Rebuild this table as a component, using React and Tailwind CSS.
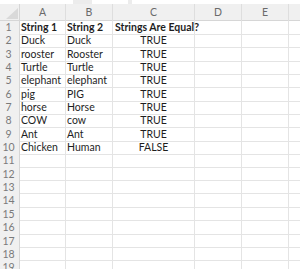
const rows = [
  ['String 1', 'String 2', 'Strings Are Equal?'],
  ['Duck', 'Duck', 'TRUE'],
  ['rooster', 'Rooster', 'TRUE'],
  ['Turtle', 'Turtle', 'TRUE'],
  ['elephant', 'elephant', 'TRUE'],
  ['pig', 'PIG', 'TRUE'],
  ['horse', 'Horse', 'TRUE'],
  ['COW', 'cow', 'TRUE'],
  ['Ant', 'Ant', 'TRUE'],
  ['Chicken', 'Human', 'FALSE'],
];

const cols = ['A', 'B', 'C', 'D', 'E', ''];
const gridCols = 'grid grid-cols-[20px_46px_47px_82px_47px_47px_1fr]';

function RowCells({ n, data }) {
  const bold = n === 1;
  return (
    <div className={`${gridCols} h-[13.35px] leading-[13px]`}>
      <div className="bg-[#f0f0f0] border-r border-[#d6d6d6] text-center text-[#7a7a7a] pr-[2px]">{n}</div>
      <div className={`border-r border-b border-[#e4e4e4] pl-[1px] text-[#1e1e1e] whitespace-nowrap ${bold ? 'font-bold' : ''}`}>{data ? data[0] : ''}</div>
      <div className={`border-r border-b border-[#e4e4e4] pl-[1px] text-[#1e1e1e] whitespace-nowrap ${bold ? 'font-bold' : ''}`}>{data ? data[1] : ''}</div>
      <div className={`border-r border-b border-[#e4e4e4] px-[2px] text-[#1e1e1e] whitespace-nowrap ${bold ? 'font-bold text-left' : 'text-center'}`}>{data ? data[2] : ''}</div>
      <div className="border-r border-b border-[#e4e4e4]" />
      <div className="border-r border-b border-[#e4e4e4]" />
      <div className="border-b border-[#e4e4e4]" />
    </div>
  );
}

export default function App() {
  const all = Array.from({ length: 19 }, (_, i) => i + 1);
  return (
    <div className="w-[300px] h-[269px] overflow-hidden bg-white text-[10.5px] font-['Lato','Liberation_Sans',sans-serif]">
      {/* formula bar edge */}
      <div className="h-[4px] flex bg-[#ececec]">
        <div className="w-[73px] bg-white" />
        <div className="w-[19px]" />
        <div className="w-[36px] bg-white" />
        <div className="w-[4px]" />
        <div className="flex-1 bg-white" />
      </div>
      {/* column headers */}
      <div className={`${gridCols} h-[17px] bg-[#f0f0f0] border-b border-[#d6d6d6] text-[#6a6a6a] leading-[17px]`}>
        <div className="relative border-r border-[#d6d6d6]">
          <svg className="absolute left-[6px] top-[4px]" width="12" height="11" viewBox="0 0 12 11">
            <polygon points="12,0 12,11 0,11" fill="#d9d9d9" />
          </svg>
        </div>
        {cols.map((c, i) => (
          <div key={i} className={`text-center ${i < 5 ? 'border-r border-[#dedede]' : ''}`}>{c}</div>
        ))}
      </div>
      {all.map((n) => (
        <RowCells key={n} n={n} data={rows[n - 1]} />
      ))}
    </div>
  );
}
